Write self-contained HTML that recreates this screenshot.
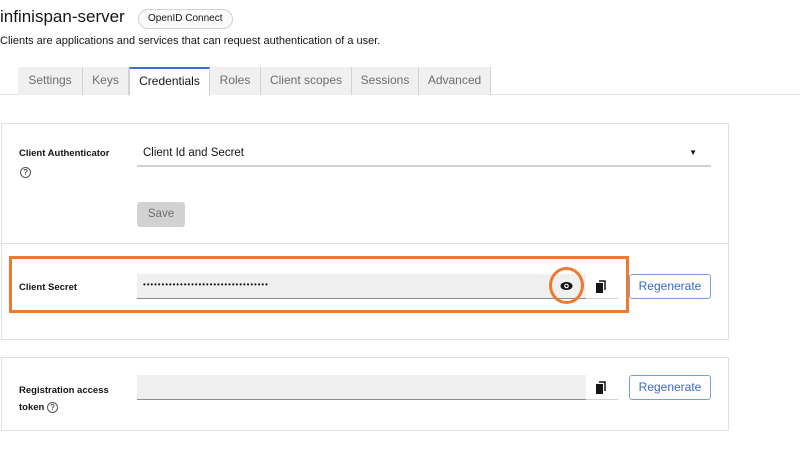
<!DOCTYPE html>
<html><head><style>
*{box-sizing:border-box;margin:0;padding:0}
body{width:800px;height:465px;background:#fff;font-family:"Liberation Sans",sans-serif;color:#151515;position:relative;overflow:hidden}
.a{position:absolute}
.tab{position:absolute;top:67px;height:28px;background:#f0f0f0;border-right:1px solid #d2d2d2;font-size:12px;color:#6a6e73;text-align:center;line-height:27px}
.card{position:absolute;left:1px;width:728px;border:1px solid #e0e0e0;background:#fff}
.lbl{position:absolute;font-size:9.5px;font-weight:bold;color:#151515}
.inp{position:absolute;background:#f0f0f0;border-bottom:1px solid #8a8d90;height:25px}
.btn{position:absolute;border:1px solid #7c9ee0;border-radius:3px;color:#3b68c8;font-size:12px;text-align:center;line-height:23px;background:#fff;height:25px;width:82px}
.q{display:inline-block;width:11px;height:11px;border:1px solid #555;border-radius:50%;font-size:8px;line-height:9px;text-align:center;font-weight:normal;vertical-align:middle}
</style></head><body>
<div class="a" style="left:0;top:7px;font-size:17px;color:#151515">infinispan-server</div>
<div class="a" style="left:138px;top:9px;height:20px;padding:0 9px;border:1px solid #d2d2d2;border-radius:10px;font-size:10px;line-height:18px;background:#fafafa">OpenID Connect</div>
<div class="a" style="left:0;top:35px;font-size:11px">Clients are applications and services that can request authentication of a user.</div>
<div class="a" style="left:0;top:94px;width:800px;height:1px;background:#e0e0e0"></div>
<div class="tab" style="left:18px;width:65px">Settings</div>
<div class="tab" style="left:83px;width:46px">Keys</div>
<div class="tab" style="left:129px;width:81px;background:#fff;border-top:2px solid #3b6fd6;color:#151515;line-height:24px;border-left:1px solid #d2d2d2;height:29px">Credentials</div>
<div class="tab" style="left:210px;width:51px">Roles</div>
<div class="tab" style="left:261px;width:91px">Client scopes</div>
<div class="tab" style="left:352px;width:67px">Sessions</div>
<div class="tab" style="left:419px;width:72px">Advanced</div>

<div class="card" style="top:123px;height:121px"></div>
<div class="lbl" style="left:19px;top:148px">Client Authenticator</div>
<div class="a" style="left:20px;top:164px"><span class="q">?</span></div>
<div class="a" style="left:137px;top:141px;width:574px;height:26px;border-bottom:2px solid #d2d2d2;font-size:11.5px;line-height:24px;padding-left:6px;background:#fff">Client Id and Secret<span style="position:absolute;right:14px;top:0;font-size:8px">▼</span></div>
<div class="a" style="left:137px;top:202px;width:48px;height:25px;background:#d2d2d2;border-radius:3px;color:#6a6e73;font-size:11.5px;text-align:center;line-height:25px">Save</div>

<div class="card" style="top:243px;height:97px"></div>
<div class="lbl" style="left:19px;top:282px">Client Secret</div>
<div class="inp" style="left:137px;top:274px;width:449px;font-size:8px;line-height:22px;padding-left:6px;letter-spacing:0.9px">••••••••••••••••••••••••••••••••••</div>
<div class="a" style="left:586px;top:274px;width:32px;height:25px;background:#fff;border-bottom:1px solid #d2d2d2"></div>
<svg class="a" style="left:594px;top:280px" width="14" height="14" viewBox="0 0 14 14"><rect x="2" y="3" width="7" height="10" fill="#151515"/><path d="M5 1h6v9" fill="none" stroke="#151515" stroke-width="1.5"/></svg>
<svg class="a" style="left:560px;top:281px" width="13" height="10" viewBox="0 0 13 10"><ellipse cx="6.5" cy="5" rx="6" ry="4" fill="#151515"/><circle cx="6.5" cy="5" r="2.3" fill="#fff"/><circle cx="6.5" cy="5" r="1.2" fill="#151515"/></svg>
<div class="a" style="left:549px;top:267px;width:35px;height:37px;border:3px solid #ee7a30;border-radius:50%"></div>
<div class="a" style="left:9px;top:256px;width:620px;height:57px;border:3px solid #ee7a30"></div>
<div class="btn" style="left:629px;top:274px">Regenerate</div>

<div class="card" style="top:357px;height:74px"></div>
<div class="lbl" style="left:19px;top:382px;line-height:17px">Registration access<br>token <span class="q">?</span></div>
<div class="inp" style="left:137px;top:375px;width:449px"></div>
<div class="a" style="left:586px;top:375px;width:32px;height:25px;background:#fff;border-bottom:1px solid #d2d2d2"></div>
<svg class="a" style="left:594px;top:381px" width="14" height="14" viewBox="0 0 14 14"><rect x="2" y="3" width="7" height="10" fill="#151515"/><path d="M5 1h6v9" fill="none" stroke="#151515" stroke-width="1.5"/></svg>
<div class="btn" style="left:629px;top:375px">Regenerate</div>
</body></html>
